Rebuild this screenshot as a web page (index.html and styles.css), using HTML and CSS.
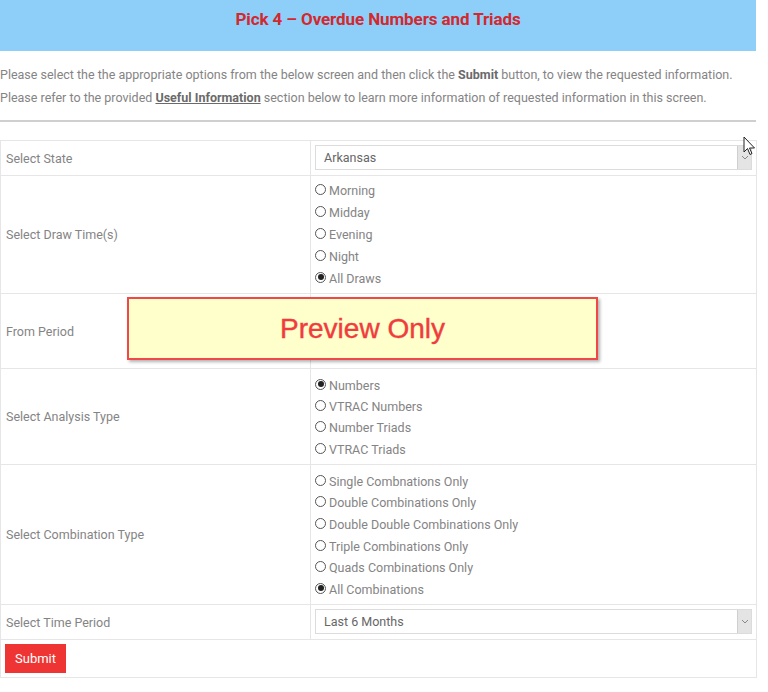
FILE: index.html
```html
<!DOCTYPE html>
<html lang="en">
<head>
<meta charset="utf-8">
<title>Pick 4 – Overdue Numbers and Triads</title>
<link rel="stylesheet" href="styles.css">
</head>
<body>
<div class="page">
  <div class="banner"><h1 class="title">Pick 4 – Overdue Numbers and Triads</h1></div>
  <div class="intro">
    <p>Please select the the appropriate options from the below screen and then click the <b>Submit</b> button, to view the requested information.</p>
    <p>Please refer to the provided <a class="link">Useful Information</a> section below to learn more information of requested information in this screen.</p>
  </div>
  <hr class="rule">
  <div class="form">
    <div class="row row-state">
      <div class="label">Select State</div>
      <div class="field">
        <div class="select"><span>Arkansas</span><span class="arrow"><svg width="8" height="5" viewBox="0 0 8 5"><path d="M1 1l3 3 3-3" fill="none" stroke="#888" stroke-width="1"/></svg></span></div>
      </div>
    </div>
    <div class="row row-draw">
      <div class="label">Select Draw Time(s)</div>
      <div class="field radios">
        <label class="radio"><span class="dot"></span>Morning</label>
        <label class="radio"><span class="dot"></span>Midday</label>
        <label class="radio"><span class="dot"></span>Evening</label>
        <label class="radio"><span class="dot"></span>Night</label>
        <label class="radio"><span class="dot on"></span>All Draws</label>
      </div>
    </div>
    <div class="row row-period">
      <div class="label">From Period</div>
      <div class="field"></div>
      <div class="preview">Preview Only</div>
    </div>
    <div class="row row-analysis">
      <div class="label">Select Analysis Type</div>
      <div class="field radios">
        <label class="radio"><span class="dot on"></span>Numbers</label>
        <label class="radio"><span class="dot"></span>VTRAC Numbers</label>
        <label class="radio"><span class="dot"></span>Number Triads</label>
        <label class="radio"><span class="dot"></span>VTRAC Triads</label>
      </div>
    </div>
    <div class="row row-combo">
      <div class="label">Select Combination Type</div>
      <div class="field radios">
        <label class="radio"><span class="dot"></span>Single Combnations Only</label>
        <label class="radio"><span class="dot"></span>Double Combinations Only</label>
        <label class="radio"><span class="dot"></span>Double Double Combinations Only</label>
        <label class="radio"><span class="dot"></span>Triple Combinations Only</label>
        <label class="radio"><span class="dot"></span>Quads Combinations Only</label>
        <label class="radio"><span class="dot on"></span>All Combinations</label>
      </div>
    </div>
    <div class="row row-time">
      <div class="label">Select Time Period</div>
      <div class="field">
        <div class="select"><span>Last 6 Months</span><span class="arrow"><svg width="8" height="5" viewBox="0 0 8 5"><path d="M1 1l3 3 3-3" fill="none" stroke="#888" stroke-width="1"/></svg></span></div>
      </div>
    </div>
    <div class="row-submit">
      <button class="submit">Submit</button>
    </div>
  </div>
  <svg class="cursor" width="14" height="20" viewBox="0 0 14 20"><path d="M1 1v15l3.5-3.5 2.5 6 2-1-2.5-5.5h5z" fill="#fff" stroke="#222" stroke-width="1"/></svg>
</div>
</body>
</html>
```
FILE: styles.css
```css
* { box-sizing: border-box; }
html, body { margin: 0; padding: 0; background: #fff; }
body { font-family: Roboto, "Noto Sans", sans-serif; font-size: 13px; color: #848484; }
.page { position: relative; width: 768px; height: 692px; }
.banner { width: 756px; height: 51px; background: #8ecffa; display: flex; justify-content: center; padding-top: 9px; }
.title { margin: 0; font-size: 17px; line-height: 20px; font-weight: 700; color: #d2282e; letter-spacing: -0.1px; }
.intro { padding-top: 12px; }
.intro p { margin: 0; line-height: 23px; font-size: 12.5px; }
.intro b { color: #6a6a6a; }
.link { color: #6a6a6a; font-weight: 700; text-decoration: underline; }
.rule { margin: 11px 0 0; width: 756px; border: 0; border-top: 2px solid #cfcfcf; height: 0; }
.form { margin-top: 18px; width: 757px; border: 1px solid #e6e6e6; }
.row { display: flex; position: relative; border-bottom: 1px solid #e6e6e6; }
.label { width: 310px; flex: none; padding-left: 5px; display: flex; align-items: center; border-right: 1px solid #e6e6e6; font-size: 12.5px; }
.field { flex: 1; padding: 4px 4px; }
.row-state, .row-time { height: 35px; }
.select { height: 25px; border: 1px solid #dcdcdc; display: flex; align-items: center; justify-content: space-between; padding-left: 8px; color: #666; font-size: 12.5px; }
.arrow { width: 14px; height: 23px; background: #e4e4e4; border-left: 1px solid #cfcfcf; display: flex; align-items: center; justify-content: center; }
.radios { display: flex; flex-direction: column; padding-top: 4px; padding-bottom: 4px; }
.row-analysis .radios, .row-combo .radios { padding-top: 5.5px; }
.radio { display: flex; align-items: center; height: 21.8px; font-size: 12.5px; }
.dot { width: 11px; height: 11px; border: 1px solid #555; border-radius: 50%; margin-right: 3px; margin-top: -2px; display: flex; align-items: center; justify-content: center; background: #fff; }
.dot.on::after { content: ""; width: 6px; height: 6px; border-radius: 50%; background: #222; }
.row-draw { height: 118px; }
.row-period { height: 75px; }
.row-analysis { height: 96px; }
.row-combo { height: 140px; }
.preview { position: absolute; left: 126px; top: 3px; width: 471px; height: 63px; background: #ffffcc; border: 2px solid #f04848; box-shadow: 2px 2px 3px rgba(0,0,0,0.3); display: flex; align-items: center; justify-content: center; color: #f03c3c; font-family: "Liberation Sans", Arial, sans-serif; font-size: 28px; -webkit-text-stroke: 0.4px #f03c3c; }
.row-submit { height: 37px; padding: 4px; }
.submit { width: 61px; height: 29px; border: 0; background: #ef3434; color: #fff; font-family: Roboto, sans-serif; font-size: 13px; padding: 0; }
.cursor { position: absolute; left: 743px; top: 136px; }
```
